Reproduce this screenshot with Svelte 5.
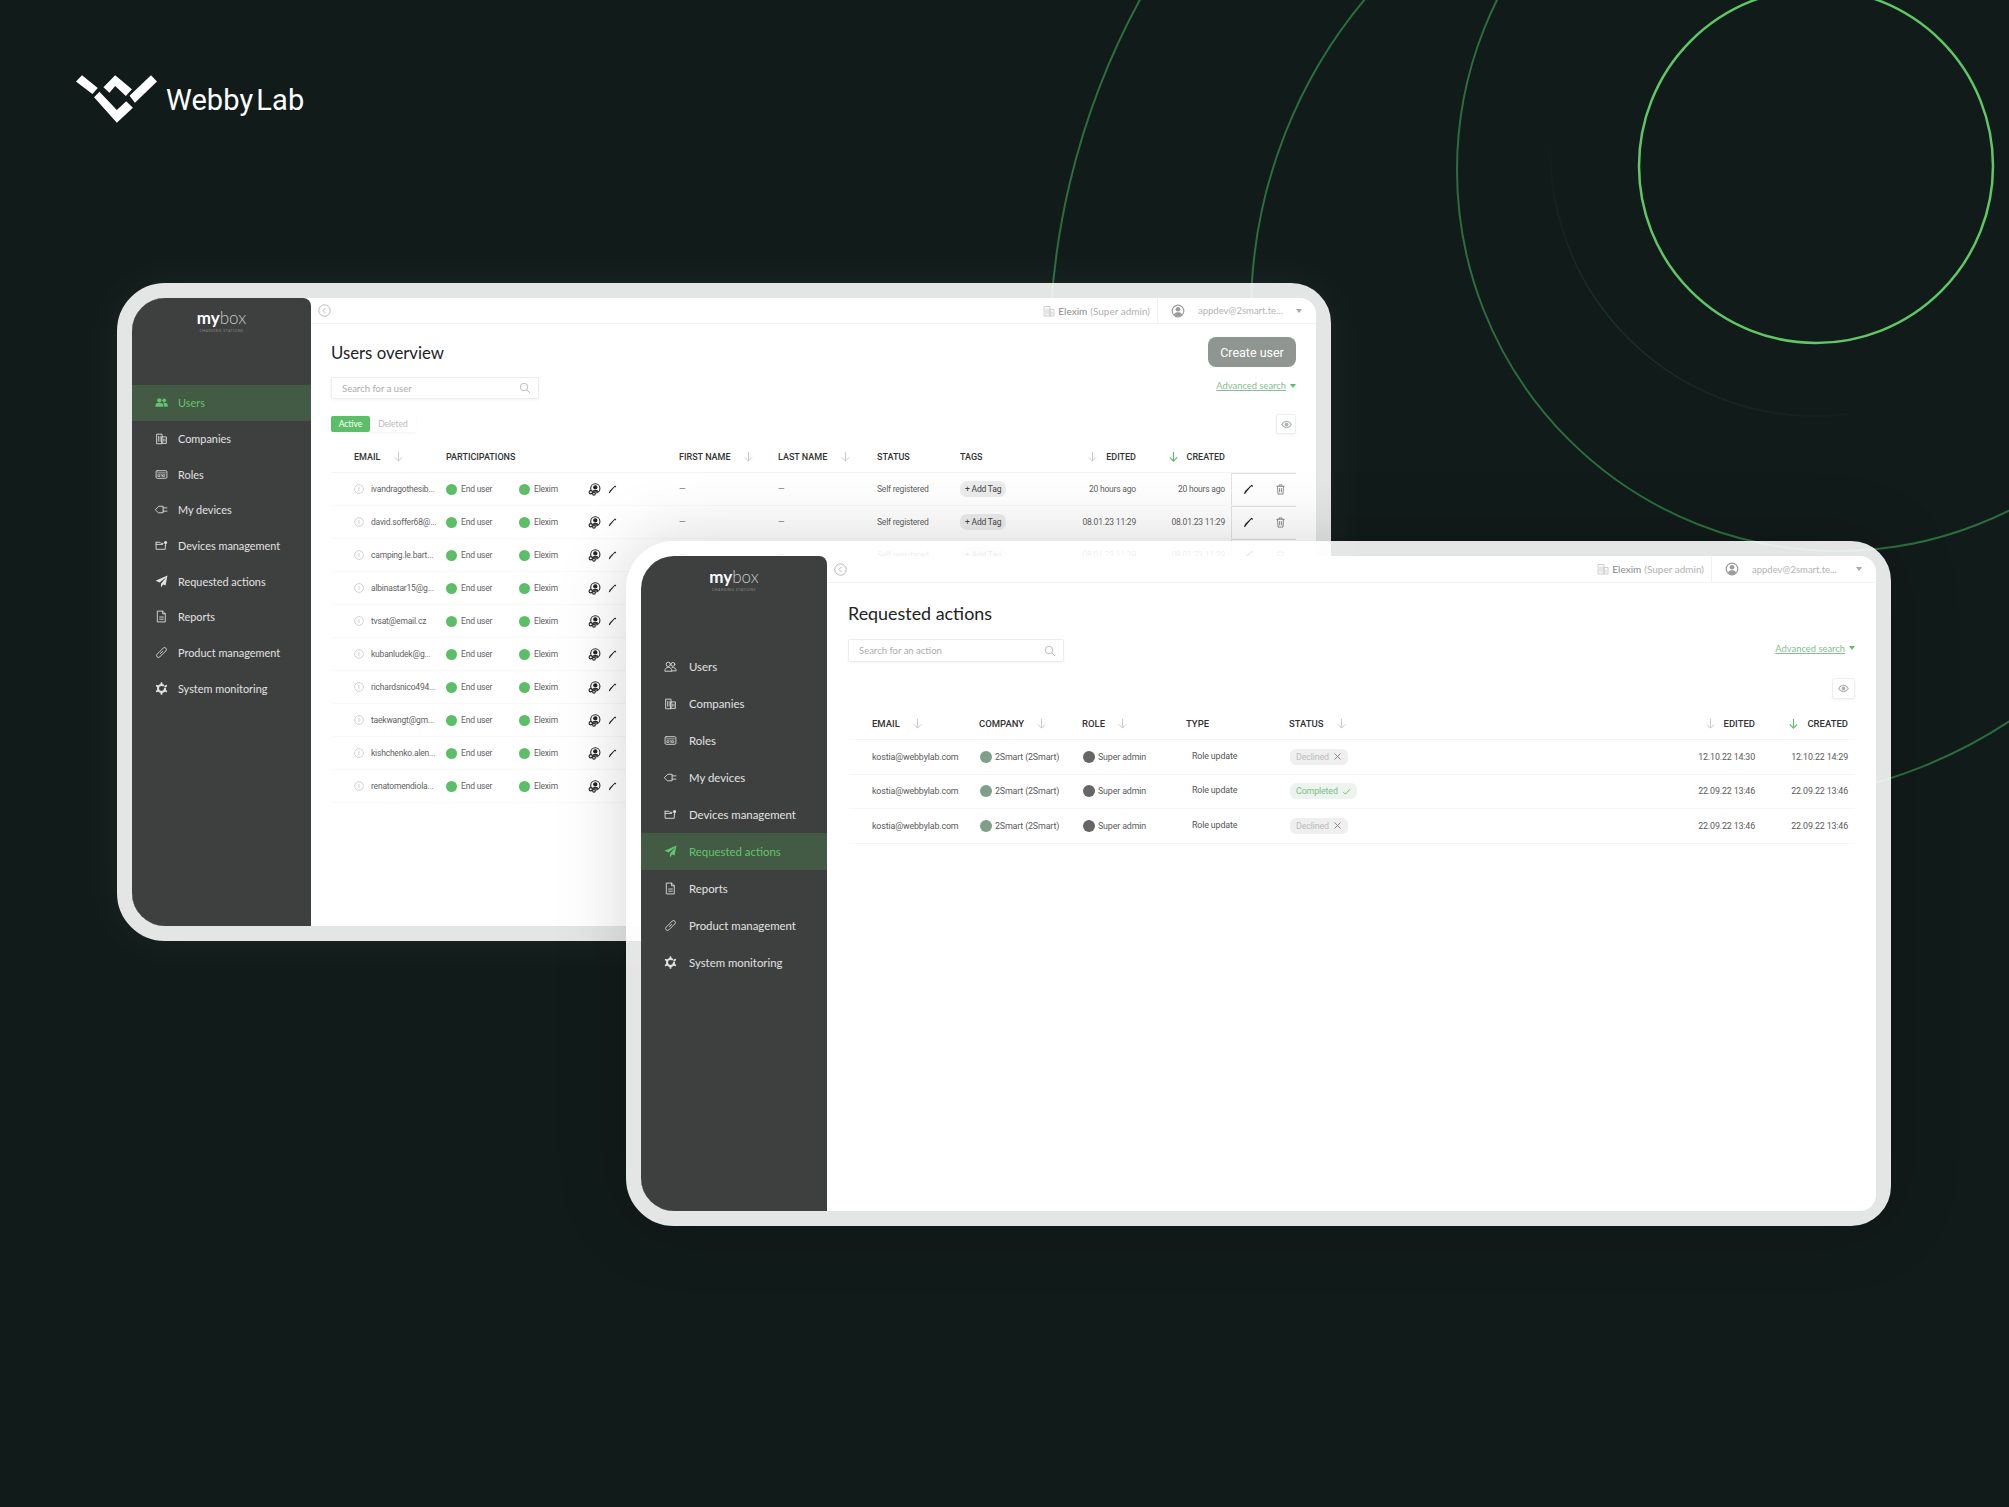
<script>
    const nav_items = [
        ['users', 'Users'],
        ['companies', 'Companies'],
        ['roles', 'Roles'],
        ['devices', 'My devices'],
        ['folder', 'Devices management'],
        ['plane', 'Requested actions'],
        ['report', 'Reports'],
        ['link', 'Product management'],
        ['gear', 'System monitoring']
    ];

    const users = [
        ['ivandragothesib...', 'Self registered', '20 hours ago', '20 hours ago'],
        ['david.soffer68@...', 'Self registered', '08.01.23 11:29', '08.01.23 11:29'],
        ['camping.le.bart...', 'Self registered', '08.01.23 11:29', '08.01.23 11:29'],
        ['albinastar15@g...'],
        ['tvsat@email.cz'],
        ['kubanludek@g...'],
        ['richardsnico494...'],
        ['taekwangt@gm...'],
        ['kishchenko.alen...'],
        ['renatomendiola...']
    ];

    const actions = [
        ['Declined', '12.10.22 14:30', '12.10.22 14:29'],
        ['Completed', '22.09.22 13:46', '22.09.22 13:46'],
        ['Declined', '22.09.22 13:46', '22.09.22 13:46']
    ];
</script>

{#snippet icon(name, filled)}
    <svg class="nav-icon" viewBox="0 0 24 24" fill="none" stroke="currentColor" stroke-width="1.6" stroke-linejoin="round" stroke-linecap="round">
        {#if name === 'users' && filled}
            <g fill="currentColor" stroke="none">
                <circle cx="8" cy="8" r="4" /><circle cx="17" cy="8" r="3.6" />
                <path d="M1 20v-3c0-3 3-4.500 7-4.500s7 1.500 7 4.500v3zM16.500 20v-3.500c0-1.500-.8-2.800-2-3.700 1-.3 2-.3 3-.3 3.500 0 6 1.200 6 4v3.500z" />
            </g>
        {:else if name === 'users'}
            <circle cx="8" cy="8" r="4" /><circle cx="16.500" cy="8" r="3.500" />
            <path d="M1.500 20c0-4 3-6.500 6.500-6.500s6.500 2.500 6.500 6.500zM15 13.500c4-.5 7.500 2 7.500 6.500H14.500" />
        {:else if name === 'companies'}
            <path d="M3 21V4h10v17zM13 9h8v12h-8z" />
            <path d="M6.500 8v9M9.500 8v9M16 13v4M18.500 13v4" stroke-width="1.300" />
        {:else if name === 'roles'}
            <rect x="2" y="5" width="20" height="14" rx="2" />
            <path d="M5 9h14M6 12.500h3v3H6zM11 12.500h2v3M15 12.500h3v3h-3z" stroke-width="1.300" />
        {:else if name === 'devices'}
            <path d="M1 12l6-6h8v12H7zM15 9h7M15 15h7" />
        {:else if name === 'folder'}
            <path d="M2 6h7l2 2h4M2 6v13h17v-7M2 10h12" />
            <circle cx="19.500" cy="6.500" r="2.800" fill="currentColor" stroke="none" />
            <path d="M19.500 8v4" />
        {:else if name === 'plane'}
            <path d="M23 1L1 10.500l7.500 3.200L21 4 11 16v7l4-5.500 4.500 2z" fill="currentColor" stroke="none" />
        {:else if name === 'report'}
            <path d="M5 2h9l5 5v15H5zM14 2v5h5M8.500 13h7M8.500 17h7" />
        {:else if name === 'link'}
            <path d="M10 14l4-4M9 10l-5 5a3.500 3.500 0 0 0 5 5l5-5M10 9l5-5a3.500 3.500 0 0 1 5 5l-5 5" />
        {:else if name === 'gear'}
            <circle cx="12" cy="12" r="6.500" stroke-width="3.800" stroke-dasharray="33 8" />
            <path d="M12 2v2M12 20v2M3.300 7l1.700 1M19 16l1.700 1M3.300 17l1.700-1M19 8l1.700-1" stroke-width="3.400" />
        {/if}
    </svg>
{/snippet}

{#snippet sidebar(active, filled)}
    <aside class="sidebar">
        <div class="brand-box">
            <div class="mybox"><b>my</b><span>box</span></div>
            <div class="tagline">CHARGING STATIONS</div>
        </div>
        <nav>
            {#each nav_items as item}
                <div class="nav-item" class:active={item[1] === active}>
                    {@render icon(item[0], filled && item[1] === active)}
                    <span>{item[1]}</span>
                </div>
            {/each}
        </nav>
    </aside>
{/snippet}

{#snippet topbar()}
    <div class="topbar">
        <svg class="back-btn" viewBox="0 0 24 24" fill="none" stroke="#b5b5b5" stroke-width="1.800">
            <circle cx="12" cy="12" r="10.500" /><path d="M14 7l-5 5 5 5" />
        </svg>
        <div class="company">
            <svg class="company-icon" viewBox="0 0 24 24" fill="none" stroke="#bdbdbd" stroke-width="1.500">
                <path d="M2 22V3h12v19zM14 9h8v13h-8zM6 7v12M10 7v12M18 13v6" />
            </svg>
            <b>Elexim</b> <span>(Super admin)</span>
        </div>
        <div class="account">
            <svg class="user-icon" viewBox="0 0 24 24">
                <circle cx="12" cy="12" r="10" fill="none" stroke="#9b9b9b" stroke-width="2" />
                <circle cx="12" cy="9" r="4" fill="#9b9b9b" />
                <path d="M5 18.500c1-3.500 4-4.500 7-4.500s6 1 7 4.500c-2 2-4.500 3-7 3s-5-1-7-3z" fill="#9b9b9b" />
            </svg>
            <span class="mail">appdev@2smart.te...</span>
            <i class="caret grey"></i>
        </div>
    </div>
{/snippet}

{#snippet search(text)}
    <div class="search">
        <span>{text}</span>
        <svg class="search-icon" viewBox="0 0 24 24" fill="none" stroke="#b5b5b5" stroke-width="1.800">
            <circle cx="10" cy="10" r="7.500" /><path d="M15.500 15.500L22 22" />
        </svg>
    </div>
{/snippet}

{#snippet advanced()}
    <div class="advanced"><u>Advanced search</u><i class="caret green"></i></div>
{/snippet}

{#snippet eye()}
    <div class="eye-btn">
        <svg viewBox="0 0 24 24" fill="none" stroke="#aeb4b1" stroke-width="2.400">
            <path d="M1.500 12C5 6.500 8.500 5 12 5s7 1.500 10.500 7C19 17.500 15.500 19 12 19s-7-1.500-10.500-7z" />
            <circle cx="12" cy="12" r="3" fill="#aeb4b1" />
        </svg>
    </div>
{/snippet}

{#snippet arrow(on)}
    <svg class="sort" viewBox="0 0 24 24" fill="none" stroke={on ? '#5cbf68' : '#c4c4c4'} stroke-width={on ? 2.600 : 2}>
        <path d="M12 2v20M4 14l8 8 8-8" />
    </svg>
{/snippet}

{#snippet pencil(cls)}
    <svg class={cls} viewBox="0 0 24 24"><path d="M2 22l2.500-6.500L18 2l1.500 1.500-12 14L5 21z M19 1.500l3 3-2 2-3-3z" fill="#222" /></svg>
{/snippet}

<div class="stage">
    <svg class="rings" viewBox="0 0 2009 1507" fill="none">
        <defs>
            <linearGradient id="fade" x1="0" y1="0" x2="1" y2="1">
                <stop offset="0" stop-color="#1a3324" stop-opacity="0" />
                <stop offset="0.45" stop-color="#1a3324" />
                <stop offset="1" stop-color="#1a3324" stop-opacity="0.2" />
            </linearGradient>
        </defs>
        <circle cx="1816" cy="166" r="177" stroke="#5fc766" stroke-width="2.500" />
        <path d="M1552 120 A266 266 0 0 0 1850 414" stroke="url(#fade)" stroke-width="1.500" />
        <circle cx="1838" cy="170" r="381" stroke="#2b6e3c" stroke-width="2" />
        <circle cx="1740" cy="313" r="489" stroke="#2b6e3c" stroke-width="2" />
        <path d="M1051 400 A745 745 0 0 1 1151 -20" stroke="#2b6e3c" stroke-width="2" />
    </svg>

    <header class="brand">
        <svg class="brand-mark" viewBox="228 226 242 142">
            <g fill="#fff">
                <polygon points="228,245 246,226 293,264 277,282" />
                <polygon points="282,292 298,275 350,330 378,304 398,323 350,368" />
                <polygon points="310,262 345,226 395,268 377,288 345,258 328,278" />
                <polygon points="470,245 452,226 388,287 404,308" />
            </g>
        </svg>
        <div class="brand-name">Webby<span>Lab</span></div>
    </header>

    <section class="window back">
        <div class="screen">
            {@render sidebar('Users', true)}
            <main>
                {@render topbar()}
                <div class="content">
                    <div class="head-row">
                        <h1>Users overview</h1>
                        <div class="create-btn">Create user</div>
                    </div>
                    <div class="search-row">
                        {@render search('Search for a user')}
                        {@render advanced()}
                    </div>
                    <div class="tools-row">
                        <div class="tabs"><span class="tab on">Active</span><span class="tab">Deleted</span></div>
                        {@render eye()}
                    </div>
                    <div class="u-table">
                        <div class="u-row u-head">
                            <div class="pad">EMAIL <span class="gap">{@render arrow(false)}</span></div>
                            <div>PARTICIPATIONS</div>
                            <div>FIRST NAME <span class="gap">{@render arrow(false)}</span></div>
                            <div>LAST NAME <span class="gap">{@render arrow(false)}</span></div>
                            <div>STATUS</div>
                            <div>TAGS</div>
                            <div class="right"><span class="gap-r">{@render arrow(false)}</span>EDITED</div>
                            <div class="right"><span class="gap-r">{@render arrow(true)}</span>CREATED</div>
                            <div></div>
                        </div>
                        {#each users as user}
                            <div class="u-row">
                                <div class="pad mail-cell">
                                    <svg class="info" viewBox="0 0 24 24" fill="none" stroke="#c4c4c4" stroke-width="1.800">
                                        <circle cx="12" cy="12" r="10.500" /><path d="M12 7v10" />
                                    </svg>
                                    <span>{user[0]}</span>
                                </div>
                                <div class="part-cell">
                                    <span class="part"><i class="dot"></i>End user</span>
                                    <span class="part"><i class="dot"></i>Elexim</span>
                                    <svg class="part-icon" viewBox="0 0 24 24" fill="none" stroke="#222" stroke-width="2">
                                        <circle cx="13.500" cy="10" r="8.500" />
                                        <circle cx="13.500" cy="8" r="3" fill="#222" />
                                        <path d="M8 16c1-3 9-3 11 0" fill="#222" />
                                        <circle cx="5" cy="17" r="3" fill="#fff" />
                                        <circle cx="11" cy="20" r="2.500" fill="#fff" />
                                    </svg>
                                    {@render pencil('pen-small')}
                                </div>
                                {#if user[1]}
                                    <div class="dash">—</div>
                                    <div class="dash">—</div>
                                    <div>{user[1]}</div>
                                    <div><span class="add-tag">+ Add Tag</span></div>
                                    <div class="right">{user[2]}</div>
                                    <div class="right">{user[3]}</div>
                                    <div class="row-actions">
                                        {@render pencil('pen-big')}
                                        <svg class="trash" viewBox="0 0 24 24" fill="none" stroke="#777" stroke-width="1.800">
                                            <path d="M3 5h18M9 5V2h6v3M5.500 5l1 17h11l1-17M10 9v9M14 9v9" />
                                        </svg>
                                    </div>
                                {/if}
                            </div>
                        {/each}
                    </div>
                </div>
            </main>
        </div>
    </section>

    <section class="window front">
        <div class="screen">
            {@render sidebar('Requested actions', false)}
            <main>
                {@render topbar()}
                <div class="content">
                    <h1>Requested actions</h1>
                    <div class="search-row">
                        {@render search('Search for an action')}
                        {@render advanced()}
                    </div>
                    <div class="tools-row end">
                        {@render eye()}
                    </div>
                    <div class="a-table">
                        <div class="a-row a-head">
                            <div class="pad">EMAIL <span class="gap">{@render arrow(false)}</span></div>
                            <div>COMPANY <span class="gap">{@render arrow(false)}</span></div>
                            <div>ROLE <span class="gap">{@render arrow(false)}</span></div>
                            <div>TYPE</div>
                            <div>STATUS <span class="gap">{@render arrow(false)}</span></div>
                            <div class="right"><span class="gap-r">{@render arrow(false)}</span>EDITED</div>
                            <div class="right"><span class="gap-r">{@render arrow(true)}</span>CREATED</div>
                        </div>
                        {#each actions as action}
                            <div class="a-row">
                                <div class="pad">kostia@webbylab.com</div>
                                <div class="who"><i class="dot sage"></i>2Smart (2Smart)</div>
                                <div class="who"><i class="dot slate"></i>Super admin</div>
                                <div class="kind">Role update</div>
                                <div>
                                    <span class="pill" class:done={action[0] === 'Completed'}>
                                        {action[0]}
                                        {#if action[0] === 'Completed'}
                                            <svg viewBox="0 0 24 24" fill="none" stroke="#6fbe7c" stroke-width="2.600"><path d="M3 13l6 6L21 6" /></svg>
                                        {:else}
                                            <svg viewBox="0 0 24 24" fill="none" stroke="#888" stroke-width="2.600"><path d="M4 4l16 16M20 4L4 20" /></svg>
                                        {/if}
                                    </span>
                                </div>
                                <div class="right">{action[1]}</div>
                                <div class="right">{action[2]}</div>
                            </div>
                        {/each}
                    </div>
                </div>
            </main>
        </div>
    </section>
</div>

<style>
    :global(body) {
        margin: 0;
        background: #111b19;
    }

    .stage {
        position: relative;
        width: 2009px;
        height: 1507px;
        overflow: hidden;
        background: #111b19;
        font-family: "Lato", "Open Sans", sans-serif;
    }

    .rings {
        position: absolute;
        inset: 0;
        width: 100%;
        height: 100%;
    }

    .brand {
        position: relative;
        display: flex;
        align-items: center;
        gap: 9px;
        padding: 75px 0 0 76px;
        color: #fff;
    }

    .brand-mark {
        width: 81px;
        height: 48px;
    }

    .brand-name {
        font-family: "Roboto", sans-serif;
        font-weight: 400;
        font-size: 29px;
        letter-spacing: 0.100px;
        line-height: 34px;
        margin-top: 2px;
    }

    .brand-name span {
        margin-left: 3px;
    }

    /* windows sit on a free canvas, the front one overlaps the back one */
    .window {
        position: absolute;
        box-sizing: border-box;
        border: 15px solid rgba(255, 255, 255, 0.89);
        border-radius: 48px 40px 40px 48px;
        background-clip: padding-box;
    }

    .back {
        left: 117px;
        top: 283px;
        width: 1214px;
        height: 658px;
        box-shadow: 0 0 50px rgba(255, 255, 255, 0.05);
    }

    .front {
        left: 626px;
        top: 541px;
        width: 1265px;
        height: 685px;
        box-shadow: 0 0 70px rgba(0, 0, 0, 0.17);
    }

    .screen {
        display: flex;
        height: 100%;
        background: #fff;
        border-radius: 33px 16px 16px 33px;
        overflow: hidden;
    }

    main {
        flex: 1;
        min-width: 0;
        display: flex;
        flex-direction: column;
    }

    .sidebar {
        flex: none;
        background: #3e403f;
        border-top-right-radius: 8px;
        color: #e2e2e2;
    }

    .back .sidebar {
        width: 179px;
    }

    .front .sidebar {
        width: 186px;
    }

    .brand-box {
        display: flex;
        flex-direction: column;
        align-items: center;
    }

    .back .brand-box {
        height: 87px;
        padding-top: 9px;
        box-sizing: border-box;
    }

    .front .brand-box {
        height: 91.500px;
        padding-top: 10px;
        box-sizing: border-box;
    }

    .mybox {
        font-size: 17px;
        line-height: 22px;
        color: #fff;
    }

    .mybox b {
        font-weight: 700;
    }

    .mybox span {
        font-weight: 300;
        color: #c9c9c9;
    }

    .tagline {
        font-size: 3.500px;
        line-height: 5px;
        letter-spacing: 0.500px;
        color: #8b8b8b;
    }

    .nav-item {
        display: flex;
        align-items: center;
        font-weight: 400;
    }

    .back .nav-item {
        height: 35.670px;
        padding-left: 23px;
        gap: 10px;
        font-size: 10.900px;
    }

    .front .nav-item {
        height: 37.100px;
        padding-left: 23px;
        gap: 12px;
        font-size: 11.400px;
    }

    .nav-item.active {
        background: #435a45;
        color: #62c46c;
    }

    .nav-icon {
        flex: none;
        width: 13px;
        height: 13px;
    }

    .topbar {
        flex: none;
        display: flex;
        align-items: center;
        border-bottom: 1px solid #f3f3f3;
        box-sizing: border-box;
        padding-left: 7px;
    }

    .back .topbar {
        height: 26px;
    }

    .front .topbar {
        height: 27px;
    }

    .back-btn {
        width: 13px;
        height: 13px;
    }

    .company {
        margin-left: auto;
        display: flex;
        align-items: center;
        font-size: 10px;
        color: #b0b0b0;
        gap: 3px;
        padding-right: 7px;
    }

    .company b {
        font-weight: 400;
        color: #8a8a8a;
    }

    .company-icon {
        width: 12px;
        height: 12px;
    }

    .account {
        align-self: stretch;
        display: flex;
        align-items: center;
        border-left: 1px solid #f0f0f0;
        font-size: 9.500px;
        color: #b4b4b4;
    }

    .back .account {
        width: 159px;
        box-sizing: border-box;
        padding: 0 14px 0 13px;
    }

    .front .account {
        width: 165px;
        box-sizing: border-box;
        padding: 0 14px 0 13px;
    }

    .user-icon {
        width: 14px;
        height: 14px;
    }

    .mail {
        margin-left: 13px;
    }

    .caret {
        display: block;
        width: 0;
        height: 0;
        border-left: 3.500px solid transparent;
        border-right: 3.500px solid transparent;
        border-top: 4px solid #a8a8a8;
    }

    .caret.grey {
        margin-left: auto;
    }

    .caret.green {
        border-top-color: #5cbf68;
        margin-left: 4px;
    }

    h1 {
        margin: 0;
        font-weight: 400;
        color: #222;
    }

    .back .content {
        padding: 13px 20px 0;
    }

    .front .content {
        padding: 18px 21px 0 21px;
    }

    .back h1 {
        font-size: 16.800px;
        line-height: 22px;
        margin-top: 1px;
    }

    .front h1 {
        font-size: 17.900px;
        line-height: 24px;
    }

    .head-row {
        display: flex;
        align-items: center;
        justify-content: space-between;
    }

    .create-btn {
        width: 88px;
        height: 30px;
        display: flex;
        align-items: center;
        justify-content: center;
        border-radius: 8px;
        background: #8f9692;
        color: #fff;
        font-family: "Roboto", sans-serif;
        font-size: 12.500px;
        font-weight: 400;
    }

    .search-row {
        display: flex;
        align-items: center;
        justify-content: space-between;
    }

    .back .search-row {
        margin-top: 10px;
    }

    .front .search-row {
        margin-top: 14px;
    }

    .search {
        display: flex;
        align-items: center;
        justify-content: space-between;
        box-sizing: border-box;
        border: 1px solid #ececec;
        border-radius: 2px;
        box-shadow: 0 1px 3px rgba(0, 0, 0, 0.05);
        padding: 0 7px 0 10px;
        color: #acacac;
        font-size: 9.500px;
    }

    .back .search {
        width: 208px;
        height: 22px;
    }

    .front .search {
        width: 216px;
        height: 23px;
    }

    .search-icon {
        width: 12px;
        height: 12px;
    }

    .advanced {
        display: flex;
        align-items: center;
        font-size: 9.400px;
        color: #86bd93;
        margin-top: -5px;
    }

    .tools-row {
        display: flex;
        align-items: center;
        justify-content: space-between;
    }

    .back .tools-row {
        margin-top: 15px;
    }

    .front .tools-row {
        margin-top: 16px;
    }

    .tools-row.end {
        justify-content: flex-end;
    }

    .tabs {
        display: flex;
        box-shadow: 0 1px 3px rgba(0, 0, 0, 0.05);
        border-radius: 2px;
    }

    .tab {
        width: 46px;
        height: 16px;
        display: flex;
        align-items: center;
        justify-content: center;
        font-size: 8.500px;
        color: #b9b9b9;
    }

    .tab.on {
        width: 39px;
        background: #5cbf68;
        color: #fff;
        border-radius: 2px;
    }

    .eye-btn {
        width: 20px;
        height: 20px;
        box-sizing: border-box;
        border: 1px solid #eeeeee;
        border-radius: 2px;
        display: flex;
        align-items: center;
        justify-content: center;
        box-shadow: 0 1px 3px rgba(0, 0, 0, 0.05);
    }

    .front .eye-btn {
        width: 23px;
        height: 21px;
    }

    .eye-btn svg {
        width: 11px;
        height: 11px;
    }

    .sort {
        display: block;
        width: 11px;
        height: 11px;
    }

    .gap {
        display: inline-block;
        margin-left: 10px;
        vertical-align: -2px;
    }

    .gap-r {
        display: inline-block;
        margin-right: 8px;
        vertical-align: -2px;
    }

    .right {
        text-align: right;
    }

    .pad {
        padding-left: 23px;
    }

    /* users table */
    .u-table {
        margin-top: 7px;
        font-family: "Roboto", sans-serif;
        font-size: 8.500px;
        letter-spacing: -0.200px;
        color: #5f5f5f;
    }

    .u-row {
        display: grid;
        grid-template-columns: 115px 233px 99px 99px 83px 100px 76px 89px 71px;
        align-items: center;
        height: 33px;
        border-bottom: 1px solid #f9f9f9;
        box-sizing: border-box;
    }

    .u-row.u-head {
        height: 32px;
        color: #333;
        font-weight: 500;
        font-size: 9px;
        letter-spacing: 0;
        border-bottom: 1px solid #f4f4f4;
    }

    .mail-cell {
        display: flex;
        align-items: center;
        gap: 7px;
        white-space: nowrap;
    }

    .info {
        flex: none;
        width: 10px;
        height: 10px;
    }

    .part-cell {
        display: grid;
        grid-template-columns: 73px 69px 20px auto;
        align-items: center;
        justify-items: start;
    }

    .part {
        display: flex;
        align-items: center;
        gap: 4px;
    }

    .dot {
        display: block;
        flex: none;
        width: 11px;
        height: 11px;
        border-radius: 50%;
        background: #5cbf68;
    }

    .part-icon {
        width: 13px;
        height: 13px;
    }

    .pen-small {
        width: 9px;
        height: 9px;
    }

    .pen-big {
        width: 11px;
        height: 11px;
    }

    .dash {
        color: #777;
    }

    .add-tag {
        display: inline-block;
        padding: 3px 5px;
        border-radius: 7px;
        background: #ececec;
        color: #444;
    }

    .row-actions {
        margin-left: 6px;
        height: 100%;
        display: flex;
        align-items: center;
        justify-content: space-around;
        border-left: 1px solid #e2e2e2;
        border-top: 1px solid #e2e2e2;
        box-sizing: border-box;
    }

    .trash {
        width: 11px;
        height: 11px;
    }

    /* requested actions table */
    .a-table {
        margin: 9px 0 0 1px;
        font-family: "Roboto", sans-serif;
        font-size: 8.900px;
        letter-spacing: -0.150px;
        color: #5a5a5a;
    }

    .a-row {
        display: grid;
        grid-template-columns: 130px 103px 104px 103px 1fr 93px 93px;
        padding-right: 7px;
        align-items: center;
        height: 34.500px;
        box-sizing: border-box;
        border-bottom: 1px solid #f5f5f5;
    }

    .a-row.a-head {
        height: 32px;
        color: #333;
        font-weight: 500;
        font-size: 9.500px;
        letter-spacing: 0;
    }

    .who {
        display: flex;
        align-items: center;
        gap: 3px;
        padding-left: 1px;
    }

    .dot.sage {
        width: 12px;
        height: 12px;
        background: #7f9f88;
    }

    .dot.slate {
        width: 12px;
        height: 12px;
        background: #666;
    }

    .kind {
        padding-left: 6px;
        color: #555;
        margin-top: -2px;
    }

    .pill {
        display: inline-flex;
        align-items: center;
        gap: 4px;
        height: 16px;
        padding: 0 6px;
        margin-left: 1px;
        border-radius: 6px;
        background: #efefef;
        color: #bcbcbc;
    }

    .pill.done {
        background: #edf3ee;
        color: #7cbf88;
    }

    .pill svg {
        width: 9px;
        height: 9px;
    }
</style>
